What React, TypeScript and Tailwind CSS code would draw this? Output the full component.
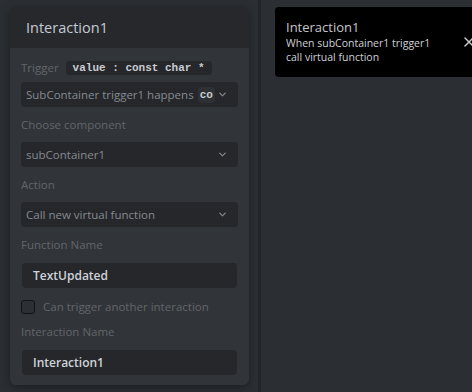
import { ChevronDown, X } from "lucide-react";

const font = { fontFamily: '"Open Sans", "Noto Sans", sans-serif' };
const mono = { fontFamily: '"Liberation Mono", "DejaVu Sans Mono", monospace' };

const Label = ({ children }: { children: React.ReactNode }) => (
  <div className="text-[11.5px] leading-[14px] text-[#62666c]">{children}</div>
);

const Select = ({ text, extra }: { text: string; extra?: boolean }) => (
  <div className="flex items-center h-[25px] rounded bg-[#25272b] pl-[5px] pr-[10px] overflow-hidden">
    <span className="text-[11.5px] text-[#868a90] whitespace-nowrap">{text}</span>
    {extra && (
      <span
        className="ml-[4px] w-[17px] h-[16px] shrink-0 overflow-hidden rounded-sm bg-[#2e3034] pl-[2px] text-[11px] font-bold leading-[16px] text-[#c9ccd1] whitespace-nowrap"
        style={mono}
      >
        co
      </span>
    )}
    <ChevronDown size={11} strokeWidth={3} className="ml-auto shrink-0 text-[#7d8187]" />
  </div>
);

const Input = ({ value }: { value: string }) => (
  <div className="mx-[1px] flex items-center h-[25px] rounded bg-[#25272b] pl-[11px] text-[12px] font-semibold text-[#cfd3d9]">
    {value}
  </div>
);

export default function App() {
  return (
    <div className="w-[472px] h-[392px] flex overflow-hidden bg-[#2b2e32]" style={font}>
      <div className="w-[258px] shrink-0 pl-[10px] pt-[7px]">
        <div className="w-[239px] rounded-md overflow-hidden shadow-[0_2px_8px_rgba(0,0,0,0.35)]">
          <div className="h-[41px] bg-[#26282c] pl-[16px] flex items-center text-[14.5px] font-medium text-[#c5cad3]">
            Interaction1
          </div>
          <div className="bg-[#313438] px-[11px] pt-[13px] pb-[10px] flex flex-col">
            <div className="flex items-center h-[14px]">
              <span className="text-[11.5px] text-[#62666c]">Trigger</span>
              <span
                className="ml-[7px] h-[14px] rounded-sm bg-[#25272b] px-[7px] text-[11px] font-bold leading-[14px] text-[#c9ccd1]"
                style={mono}
              >
                value : const char *
              </span>
            </div>
            <div className="mt-[7px]">
              <Select text="SubContainer trigger1 happens" extra />
            </div>
            <div className="mt-[11px]">
              <Label>Choose component</Label>
            </div>
            <div className="mt-[10px]">
              <Select text="subContainer1" />
            </div>
            <div className="mt-[11px]">
              <Label>Action</Label>
            </div>
            <div className="mt-[10px]">
              <Select text="Call new virtual function" />
            </div>
            <div className="mt-[11px]">
              <Label>Function Name</Label>
            </div>
            <div className="mt-[11px]">
              <Input value="TextUpdated" />
            </div>
            <div className="mt-[12px] flex items-center h-[14px]">
              <span className="w-[14px] h-[14px] rounded-[3px] border border-[#111214] bg-[#2c2f33]" />
              <span className="ml-[8px] text-[11.5px] text-[#62666c]">Can trigger another interaction</span>
            </div>
            <div className="mt-[11px]">
              <Label>Interaction Name</Label>
            </div>
            <div className="mt-[11px]">
              <Input value="Interaction1" />
            </div>
          </div>
        </div>
      </div>
      <div className="flex-1 border-l-[3px] border-[#232528] pl-[14px] pt-[7px]">
        <div className="w-[210px] h-[70px] shrink-0 rounded bg-black pl-[11px] flex">
          <div className="pt-[11px]">
            <div className="text-[13px] leading-[18px] text-[#c3c7cd]">Interaction1</div>
            <div className="text-[10.5px] leading-[14px] font-medium text-[#cdd1d6]">When subContainer1 trigger1</div>
            <div className="text-[10.5px] leading-[14px] font-medium text-[#cdd1d6]">call virtual function</div>
          </div>
          <X size={16} strokeWidth={2.2} className="ml-auto mr-[8px] mt-[27px] shrink-0 text-[#c8ccd2]" />
        </div>
      </div>
    </div>
  );
}
